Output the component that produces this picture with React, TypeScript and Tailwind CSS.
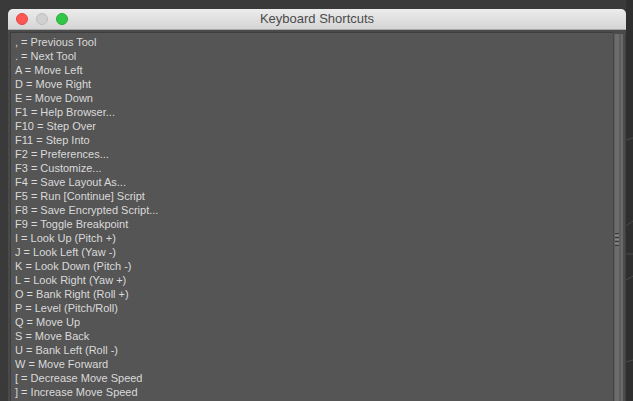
import React from "react";

const lines = [
  ", = Previous Tool",
  ". = Next Tool",
  "A = Move Left",
  "D = Move Right",
  "E = Move Down",
  "F1 = Help Browser...",
  "F10 = Step Over",
  "F11 = Step Into",
  "F2 = Preferences...",
  "F3 = Customize...",
  "F4 = Save Layout As...",
  "F5 = Run [Continue] Script",
  "F8 = Save Encrypted Script...",
  "F9 = Toggle Breakpoint",
  "I = Look Up (Pitch +)",
  "J = Look Left (Yaw -)",
  "K = Look Down (Pitch -)",
  "L = Look Right (Yaw +)",
  "O = Bank Right (Roll +)",
  "P = Level (Pitch/Roll)",
  "Q = Move Up",
  "S = Move Back",
  "U = Bank Left (Roll -)",
  "W = Move Forward",
  "[ = Decrease Move Speed",
  "] = Increase Move Speed",
];

export default function App() {
  return (
    <div
      className="w-[633px] h-[401px] overflow-hidden bg-[#3a3a3a] flex"
      style={{ fontFamily: '"Liberation Sans", Arial, sans-serif' }}
    >
      <div className="w-[8px] shrink-0" />
      <div className="w-[618px] shrink-0 mt-[9px] flex flex-col rounded-t-[5px] overflow-hidden">
        {/* title bar */}
        <div className="relative h-[21px] shrink-0 bg-gradient-to-b from-[#ececec] to-[#d5d5d5] border-b border-[#a9a9a9] flex items-center">
          <div className="flex items-center gap-[8px] pl-[8px]">
            <div className="w-[12px] h-[12px] rounded-full bg-[#fc5753] border border-[#df4744]" />
            <div className="w-[12px] h-[12px] rounded-full bg-[#d0d0d0] border border-[#bdbdbd]" />
            <div className="w-[12px] h-[12px] rounded-full bg-[#33c748] border border-[#27aa35]" />
          </div>
          <div className="absolute inset-0 flex items-center justify-center text-[13px] text-[#4b4b4b]">
            Keyboard Shortcuts
          </div>
        </div>
        {/* body */}
        <div className="flex-1 bg-[#4a4a4a] pt-[2px] pl-[2px] flex">
          <div className="flex-1 border-t border-l border-[#3e3e3e] bg-[#555555] pl-[4px] pt-[2px] text-[11px] leading-[14px] text-[#dadada]">
            {lines.map((l) => (
              <div key={l} className="whitespace-nowrap">
                {l}
              </div>
            ))}
          </div>
          {/* scrollbar */}
          <div className="w-[13px] shrink-0 flex mt-[2px]">
            <div className="w-[1px] bg-[#474747]" />
            <div className="w-[1px] bg-[#5c5c5c]" />
            <div className="w-[4px] bg-[#6d6d6d] relative">
              <div className="absolute left-[0px] top-[199px] flex flex-col gap-[1px]">
                <div className="w-[4px] h-[1px] bg-[#3c3c3c]" />
                <div className="w-[4px] h-[1px] bg-[#8a8a8a]" />
                <div className="w-[4px] h-[1px] bg-[#3c3c3c]" />
                <div className="w-[4px] h-[1px] bg-[#8a8a8a]" />
                <div className="w-[4px] h-[1px] bg-[#3c3c3c]" />
                <div className="w-[4px] h-[1px] bg-[#8a8a8a]" />
                <div className="w-[4px] h-[1px] bg-[#3c3c3c]" />
              </div>
            </div>
            <div className="w-[2px] bg-[#5e5e5e]" />
            <div className="w-[2px] bg-[#6a6a6a]" />
            <div className="w-[2px] bg-[#4c4c4c]" />
            <div className="w-[1px] bg-[#3f3f3f]" />
          </div>
        </div>
      </div>
      <div className="flex-1 bg-[#2f2f2f] relative">
        <svg width="7" height="401" className="absolute inset-0">
          <line x1="0" y1="140" x2="7" y2="138" stroke="#4a4a4a" strokeWidth="1" />
          <line x1="0" y1="226" x2="7" y2="221" stroke="#4a4a4a" strokeWidth="1" />
          <line x1="0" y1="254" x2="7" y2="254" stroke="#4a4a4a" strokeWidth="1" />
          <line x1="0" y1="280" x2="7" y2="276" stroke="#4a4a4a" strokeWidth="1" />
          <line x1="0" y1="362" x2="7" y2="360" stroke="#4a4a4a" strokeWidth="1" />
        </svg>
      </div>
    </div>
  );
}
